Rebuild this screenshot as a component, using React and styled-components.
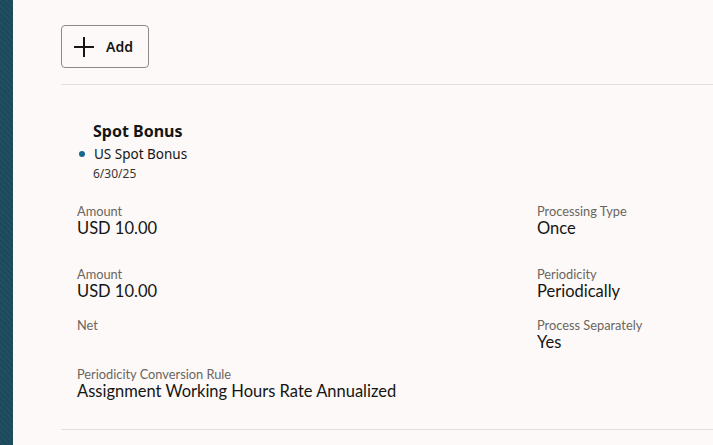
import React from 'react';
import styled, {createGlobalStyle} from 'styled-components';

const GlobalStyle = createGlobalStyle`
  html, body {
    margin: 0;
    padding: 0;
    background: #fcf9f8;
  }
  body {
    font-family: Lato, 'Noto Sans', sans-serif;
    color: #161513;
  }
`

const Page = styled.div`
  display: flex;
  width: 713px;
  height: 445px;
  overflow: hidden;
  background: #fcf9f8;
`

const Strip = styled.div`
  flex: 0 0 13px;
  background: repeating-linear-gradient(45deg, #1d4a5a 0 2px, #204f60 2px 4px);
`

const Main = styled.div`
  flex: 1;
  padding: 25px 0 0 48px;
`

const Toolbar = styled.div`
  padding-bottom: 16px;
  border-bottom: 1px solid #e1dedb;
`

const AddButton = styled.button`
  display: flex;
  align-items: center;
  gap: 12px;
  height: 43px;
  width: 88px;
  padding: 0 0 0 12px;
  border: 1px solid #8c8986;
  border-radius: 4px;
  background: #fcf9f8;
  font-family: 'Noto Sans', sans-serif;
  font-size: 14px;
  font-weight: 600;
  color: #161513;
`

const Card = styled.div`
  padding: 35px 0 28px 16px;
  border-bottom: 1px solid #e1dedb;
`

const Title = styled.div`
  margin-left: 16px;
  font-family: 'Noto Sans', sans-serif;
  font-size: 16px;
  font-weight: 700;
  line-height: 22px;
`

const Meta = styled.div`
  display: flex;
  align-items: center;
  gap: 9px;
  margin-left: 2px;
  margin-top: 3px;
  font-family: 'Noto Sans', sans-serif;
  font-size: 13.5px;
  line-height: 18px;
`

const Dot = styled.span`
  width: 6px;
  height: 6px;
  border-radius: 50%;
  background: #16698c;
`

const Date = styled.div`
  margin-left: 16px;
  margin-top: 3px;
  font-family: 'Noto Sans', sans-serif;
  font-size: 12px;
  line-height: 16px;
  color: #3a3632;
`

const Fields = styled.div`
  display: grid;
  grid-template-columns: 460px 1fr;
  margin-top: 21px;
`

const Field = styled.div`
  min-height: ${p => p.$h}px;
`

const Label = styled.div`
  font-size: 12.8px;
  line-height: 16px;
  color: #6b6560;
`

const Value = styled.div`
  font-size: 16.5px;
  line-height: 19px;
  color: #161513;
`

const PlusIcon = () => (
    <svg width="20" height="20" viewBox="0 0 20 20">
        <path d="M10 0v20M0 10h20" stroke="#161513" strokeWidth="2"/>
    </svg>
)

const rows = [
    [{label: 'Amount', value: 'USD 10.00'}, {label: 'Processing Type', value: 'Once'}, 63],
    [{label: 'Amount', value: 'USD 10.00'}, {label: 'Periodicity', value: 'Periodically'}, 51],
    [{label: 'Net'}, {label: 'Process Separately', value: 'Yes'}, 49],
    [{label: 'Periodicity Conversion Rule', value: 'Assignment Working Hours Rate Annualized'}, null, 0],
]

export default function App() {
    return (
        <Page>
            <GlobalStyle/>
            <Strip/>
            <Main>
                <Toolbar>
                    <AddButton><PlusIcon/>Add</AddButton>
                </Toolbar>
                <Card>
                    <Title>Spot Bonus</Title>
                    <Meta><Dot/>US Spot Bonus</Meta>
                    <Date>6/30/25</Date>
                    <Fields>
                        {rows.map(([left, right, h], i) => (
                            <React.Fragment key={i}>
                                <Field $h={h}>
                                    <Label>{left.label}</Label>
                                    {left.value && <Value>{left.value}</Value>}
                                </Field>
                                <Field $h={h}>
                                    {right && <Label>{right.label}</Label>}
                                    {right && <Value>{right.value}</Value>}
                                </Field>
                            </React.Fragment>
                        ))}
                    </Fields>
                </Card>
            </Main>
        </Page>
    );
}
